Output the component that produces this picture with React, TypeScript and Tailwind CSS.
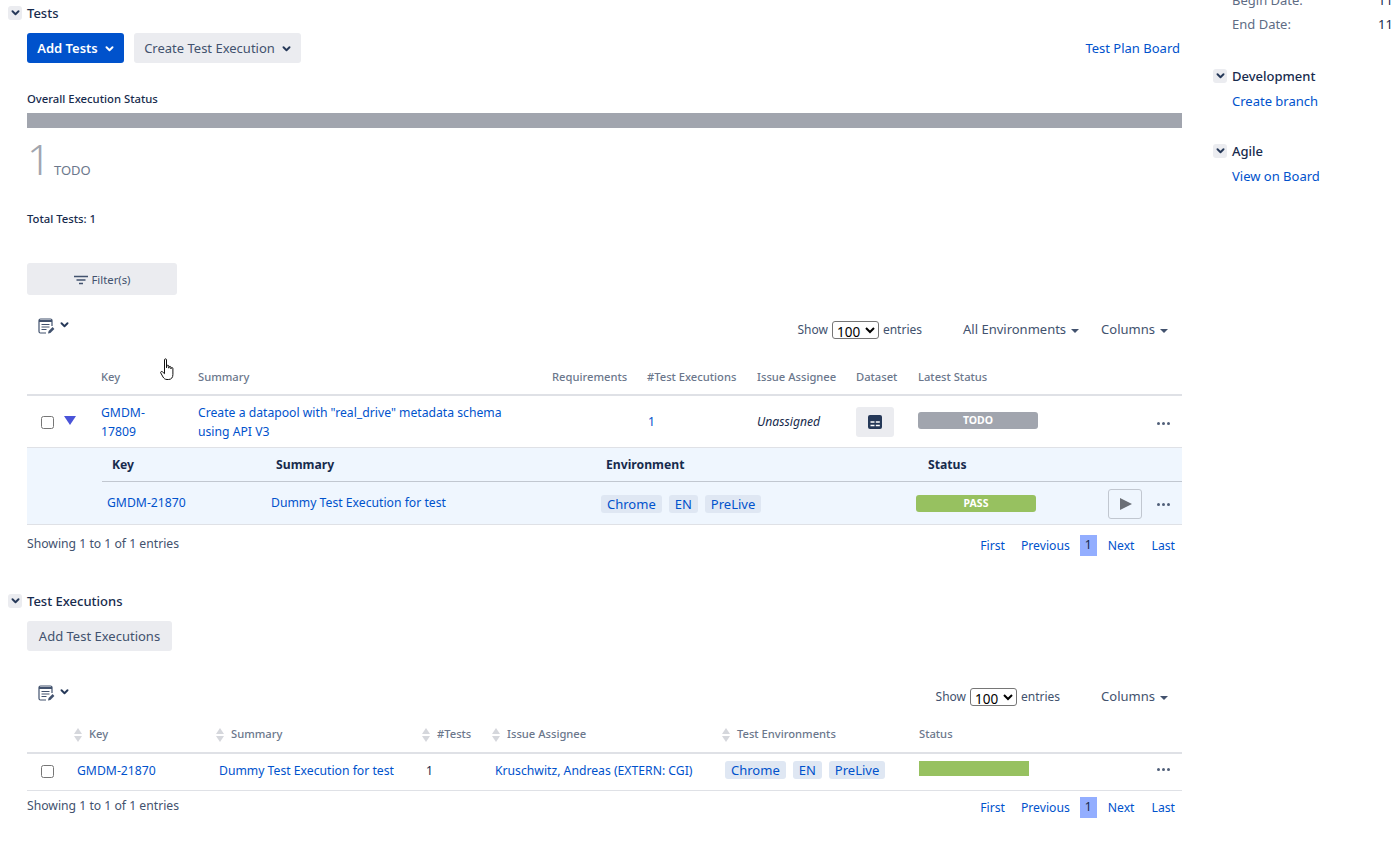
type ChevronProps = { className?: string };

const LINK = 'text-[#0052cc]';

function Chevron({ className = '' }: ChevronProps) {
  return (
    <svg viewBox="0 0 10 7" className={`h-[6px] w-[9px] ${className}`} fill="none" stroke="currentColor" strokeWidth="2.200" strokeLinecap="round" strokeLinejoin="round">
      <path d="M1.500 1.500 5 5l3.500-3.500" />
    </svg>
  );
}

function Caret() {
  return <span className="ml-[5px] inline-block h-0 w-0 border-x-[4px] border-t-[4px] border-x-transparent border-t-[#42526e] align-middle" />;
}

function SectionTitle({ title, className = '' }: { title: string; className?: string }) {
  return (
    <div className={`flex items-center ${className}`}>
      <span className="flex h-[14px] w-[14px] items-center justify-center rounded-[3px] bg-[#ebecf0] text-[#253858]">
        <Chevron />
      </span>
      <span className="ml-[5px] text-[13px] font-medium leading-5 text-[#172b4d]">{title}</span>
    </div>
  );
}

function ListEditIcon() {
  return (
    <svg viewBox="0 0 18 17" className="h-[17px] w-[18px] text-[#42526e]" fill="none" stroke="currentColor">
      <path d="M8 15H2.500A1.500 1.500 0 0 1 1 13.500V2.500A1.500 1.500 0 0 1 2.500 1h10A1.500 1.500 0 0 1 14 2.500V8" strokeWidth="1.200" />
      <path d="M1 3h13" strokeWidth="2" />
      <path d="M3.500 6.500h8M3.500 9h8M3.500 11.500h5" strokeWidth="1" />
      <path d="m10 15.500.6-2.400 4-4 1.800 1.800-4 4z" fill="currentColor" stroke="none" />
    </svg>
  );
}

function Toolbar({ children }: { children: React.ReactNode }) {
  return (
    <div className="flex h-[34px] items-start justify-between">
      <div className="ml-[11px] flex items-start gap-[4px] text-[#253858]">
        <ListEditIcon />
        <Chevron className="mt-[4px]" />
      </div>
      <div className="flex items-center pr-[14px] pt-[2px] text-[13px] text-[#42526e]">{children}</div>
    </div>
  );
}

function ShowEntries() {
  return (
    <div className="flex items-center text-[12px]">
      <span>Show</span>
      <select defaultValue="100" className="mx-[4px] h-[18px] w-[47px] rounded-[3px] border border-[#767676] text-[13.500px] leading-none text-black">
        <option value="100">100</option>
      </select>
      <span>entries</span>
    </div>
  );
}

function Tags({ values, className = '' }: { values: string[]; className?: string }) {
  return (
    <div className={`flex gap-[7px] ${className}`}>
      {values.map((value) => (
        <span key={value} className={`h-[18px] rounded-[3px] bg-[#dfe7f3] px-[6px] text-[13px] leading-[18px] ${LINK}`}>
          {value}
        </span>
      ))}
    </div>
  );
}

function Dots() {
  return (
    <span className="flex gap-[2px]">
      <i className="h-[3px] w-[3px] rounded-full bg-[#505f79]" />
      <i className="h-[3px] w-[3px] rounded-full bg-[#505f79]" />
      <i className="h-[3px] w-[3px] rounded-full bg-[#505f79]" />
    </span>
  );
}

function Footer({ className = '' }: { className?: string }) {
  return (
    <div className={`flex items-start justify-between ${className}`}>
      <span className="pt-[1px] text-[12.200px] text-[#42526e]">Showing 1 to 1 of 1 entries</span>
      <div className={`mt-[1px] flex h-[21px] items-center pr-[7px] pt-[1px] text-[12.200px] ${LINK}`}>
        <span>First</span>
        <span className="ml-[16px]">Previous</span>
        <span className="ml-[10px] -mt-[1px] flex h-[21px] w-[17px] items-center justify-center bg-[#93aeff] text-[#172b4d]">1</span>
        <span className="ml-[11px]">Next</span>
        <span className="ml-[17px]">Last</span>
      </div>
    </div>
  );
}

function SortIcon() {
  return (
    <span className="mr-[7px] inline-flex flex-col gap-[2px] align-middle">
      <i className="h-0 w-0 border-x-[4.500px] border-b-[6px] border-x-transparent border-b-[#d5d7dc]" />
      <i className="h-0 w-0 border-x-[4.500px] border-t-[6px] border-x-transparent border-t-[#d5d7dc]" />
    </span>
  );
}

function TestsTable() {
  const cols = 'grid grid-cols-[74px_97px_354px_95px_110px_99px_62px_264px]';
  return (
    <div>
      <div className={`${cols} h-[34px] items-end border-b-2 border-[#dfe1e6] pb-[7px] text-[11.200px] font-medium leading-5 text-[#6b778c]`}>
        <span className="col-start-2">Key</span>
        <span>Summary</span>
        <span>Requirements</span>
        <span>#Test Executions</span>
        <span>Issue Assignee</span>
        <span>Dataset</span>
        <span>Latest Status</span>
      </div>
      <div className={`${cols} h-[52px] items-center border-b border-[#dfe1e6] text-[12.200px] leading-[19px]`}>
        <div className="flex items-center pl-[14px] pt-[1px]">
          <input type="checkbox" className="h-[13px] w-[13px]" />
          <svg viewBox="0 0 14 11" className="ml-[9px] mb-[3px] h-[11px] w-[14px] blur-[0.5px]">
            <polygon points="1,1 13,1 7,10" fill="#4a54d8" />
          </svg>
        </div>
        <span className={`${LINK} pr-[30px]`}>GMDM-17809</span>
        <span className={`${LINK} pr-[40px]`}>Create a datapool with "real_drive" metadata schema using API V3</span>
        <span />
        <span className={`${LINK} pl-[1px]`}>1</span>
        <span className="italic text-[#172b4d]">Unassigned</span>
        <span className="flex h-[30px] w-[38px] items-center justify-center rounded-[3px] bg-[#ebecf0]">
          <svg viewBox="0 0 14 14" className="h-[14px] w-[14px]">
            <rect width="14" height="14" rx="2" fill="#253858" />
            <path d="M2.500 7h4M7.800 7h4M2.500 10.500h4M7.800 10.500h4" stroke="#fff" strokeWidth="1.400" />
          </svg>
        </span>
        <div className="flex items-center justify-between pr-[12px]">
          <span className="mb-[2px] h-[17px] w-[120px] rounded-[3px] bg-[#a1a5ae] text-center text-[10.500px] font-bold leading-[17px] text-white">TODO</span>
          <span className="mt-[3px]"><Dots /></span>
        </div>
      </div>
      <div className="border-b border-[#dfe1e6] bg-[#eff6fe]">
        <div className="ml-[75px] grid h-[34px] grid-cols-[164px_330px_322px_1fr] items-center border-b border-[#c1c7d0] pl-[10px] pt-[1px] text-[12.200px] font-bold text-[#172b4d]">
          <span>Key</span>
          <span>Summary</span>
          <span>Environment</span>
          <span>Status</span>
        </div>
        <div className="grid h-[42px] grid-cols-[164px_330px_315px_192px_48px_1fr] items-center pl-[80px] text-[12.200px]">
          <span className={`${LINK} pt-[1px]`}>GMDM-21870</span>
          <span className={`${LINK} pt-[1px]`}>Dummy Test Execution for test</span>
          <Tags values={['Chrome', 'EN', 'PreLive']} className="mt-[1px]" />
          <span className="h-[17px] w-[120px] rounded-[3px] bg-[#97c160] text-center text-[10.500px] font-bold leading-[17px] text-white">PASS</span>
          <span className="mt-[1px] flex h-[30px] w-[34px] items-center justify-center rounded-[3px] border border-[#c1c7d0]">
            <i className="ml-[2px] h-0 w-0 border-y-[6.500px] border-l-[12px] border-y-transparent border-l-[#6b6f76]" />
          </span>
          <span className="ml-[1px] mt-[3px]"><Dots /></span>
        </div>
      </div>
    </div>
  );
}

function ExecutionsTable() {
  const cols = 'grid grid-cols-[47px_142px_206px_70px_230px_197px_263px]';
  return (
    <div>
      <div className={`${cols} h-[35px] items-center border-b-2 border-[#dfe1e6] pb-[3px] text-[11.200px] font-medium text-[#6b778c]`}>
        <span className="col-start-2"><SortIcon />Key</span>
        <span><SortIcon />Summary</span>
        <span><SortIcon />#Tests</span>
        <span><SortIcon />Issue Assignee</span>
        <span><SortIcon />Test Environments</span>
        <span>Status</span>
      </div>
      <div className={`${cols} h-[37px] items-center border-b border-[#dfe1e6] pb-[2px] text-[12.200px]`}>
        <div className="pl-[14px] pt-[1px]">
          <input type="checkbox" className="block h-[13px] w-[13px]" />
        </div>
        <span className={`${LINK} pl-[3px]`}>GMDM-21870</span>
        <span className={`${LINK} pl-[3px]`}>Dummy Test Execution for test</span>
        <span className="pl-[4px] text-[#172b4d]">1</span>
        <span className={`${LINK} pl-[3px]`}>Kruschwitz, Andreas (EXTERN: CGI)</span>
        <Tags values={['Chrome', 'EN', 'PreLive']} className="-mt-[2px] pl-[3px]" />
        <div className="flex items-center justify-between pr-[12px]">
          <span className="mb-[6px] h-[15px] w-[110px] bg-[#97c160]" />
          <span className="mb-[4px]"><Dots /></span>
        </div>
      </div>
    </div>
  );
}

function Sidebar() {
  return (
    <aside className="ml-[31px] w-[178px] shrink-0 text-[13px]">
      <div className="-mt-[10px] grid grid-cols-[146px_1fr] gap-y-[4px] pl-[19px] leading-5 text-[#5e6c84]">
        <span>Begin Date:</span>
        <span className="text-[#172b4d]">11</span>
        <span>End Date:</span>
        <span className="text-[#172b4d]">11</span>
      </div>
      <SectionTitle title="Development" className="mt-[32px]" />
      <div className={`mt-[5px] pl-[19px] leading-5 ${LINK}`}>Create branch</div>
      <SectionTitle title="Agile" className="mt-[30px]" />
      <div className={`mt-[5px] pl-[19px] leading-5 ${LINK}`}>View on Board</div>
    </aside>
  );
}

export default function App() {
  return (
    <div className="relative flex h-[850px] w-[1391px] overflow-hidden bg-white font-['Noto_Sans',sans-serif]">
      <main className="w-[1182px] shrink-0 pl-[27px] pt-[3px]">
        <SectionTitle title="Tests" className="-ml-[19px]" />
        <div className="mt-[10px] flex items-center">
          <button type="button" className="flex h-[30px] w-[97px] items-center justify-center gap-[7px] rounded-[3px] bg-[#0052cc] pt-[1px] text-[13px] font-semibold text-white">
            Add Tests <Chevron />
          </button>
          <button type="button" className="ml-[10px] flex h-[30px] w-[167px] items-center justify-center gap-[7px] rounded-[3px] bg-[#ebecf0] pt-[1px] text-[13px] text-[#42526e]">
            Create Test Execution <Chevron className="text-[#253858]" />
          </button>
          <span className={`ml-auto pr-[2px] pt-[1px] text-[13px] ${LINK}`}>Test Plan Board</span>
        </div>
        <div className="mt-[27px] text-[11.300px] font-medium leading-[18px] text-[#172b4d]">Overall Execution Status</div>
        <div className="mt-[5px] h-[15px] bg-[#a1a5ae]" />
        <div className="mt-[8px] flex h-[46px] items-end">
          <span className="text-[42px] font-light leading-[46px] text-[#a1a5ae]">1</span>
          <span className="mb-[2px] ml-[3px] text-[13px] leading-5 text-[#6b778c]">TODO</span>
        </div>
        <div className="mt-[27px] text-[11.300px] font-medium leading-5 text-[#172b4d]">Total Tests: 1</div>
        <button type="button" className="mt-[34px] flex h-[32px] w-[150px] items-center justify-center gap-[4px] rounded-[3px] bg-[#ebecf0] pt-[2px] text-[11.300px] text-[#42526e]">
          <svg viewBox="0 0 14 10" className="h-[10px] w-[14px]" fill="none" stroke="currentColor" strokeWidth="1.500">
            <path d="M0 1.500h14M2.500 5h9M5 8.500h4" />
          </svg>
          Filter(s)
        </button>
        <div className="mt-[23px]">
          <Toolbar>
            <ShowEntries />
            <span className="ml-[41px]">All Environments<Caret /></span>
            <span className="ml-[22px]">Columns<Caret /></span>
          </Toolbar>
        </div>
        <div className="mt-[10px]"><TestsTable /></div>
        <Footer className="mt-[9px]" />
        <SectionTitle title="Test Executions" className="-ml-[19px] mt-[35px]" />
        <button type="button" className="mt-[10px] block h-[30px] w-[145px] rounded-[3px] bg-[#ebecf0] pt-[1px] text-[13px] text-[#42526e]">Add Test Executions</button>
        <div className="mt-[34px]">
          <Toolbar>
            <ShowEntries />
            <span className="ml-[41px]">Columns<Caret /></span>
          </Toolbar>
        </div>
        <ExecutionsTable />
        <Footer className="mt-[5px]" />
      </main>
      <Sidebar />
      <svg viewBox="0 0 18 25" className="absolute left-[160px] top-[358px] h-[25px] w-[18px]" fill="#fff" stroke="#111" strokeWidth="1" strokeLinejoin="round">
        <path d="M4.500 1.800c0-1.300 2-1.300 2 0v8l.4-2c.3-1 1.900-.8 1.900.4v2l.3-1.200c.3-1 1.800-.8 1.800.4v1.400l.3-.8c.4-.8 1.700-.6 1.700.5v6c0 3-1.500 5-4.500 5H7c-2 0-3-1-4-2.500L.8 15c-.6-1 .6-2 1.500-1.300l2.200 2z" />
      </svg>
    </div>
  );
}
